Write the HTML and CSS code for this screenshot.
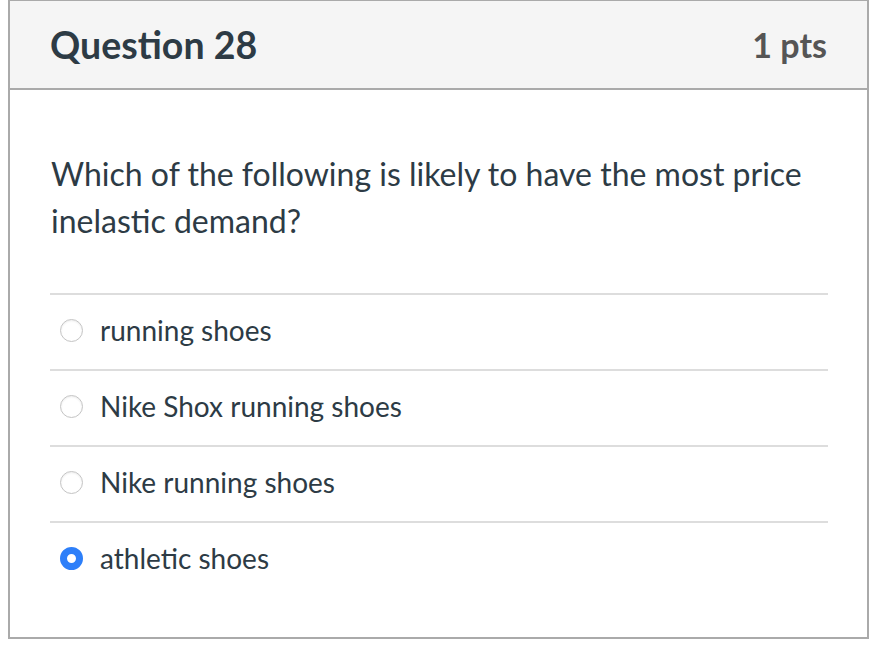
FILE: index.html
```html
<!DOCTYPE html>
<html>
<head>
<meta charset="utf-8">
<link rel="stylesheet" href="styles.css">
</head>
<body>
<div class="card">
  <div class="header">
    <div class="title">Question 28</div>
    <div class="pts">1 pts</div>
  </div>
  <div class="body">
    <div class="question">Which of the following is likely to have the most price inelastic demand?</div>
    <div class="answers">
      <div class="answer"><span class="radio"></span><span class="label">running shoes</span></div>
      <div class="answer"><span class="radio"></span><span class="label">Nike Shox running shoes</span></div>
      <div class="answer"><span class="radio"></span><span class="label">Nike running shoes</span></div>
      <div class="answer"><span class="radio checked"></span><span class="label">athletic shoes</span></div>
    </div>
  </div>
</div>
</body>
</html>
```

FILE: styles.css
```css
html, body {
  margin: 0;
  padding: 0;
  background: #ffffff;
}
body {
  padding: 0 11px 0 8px;
  font-family: Lato, "Open Sans", sans-serif;
  color: #2d3b45;
}
.card {
  border: 2px solid #aaaaaa;
  border-top-width: 1px;
  box-sizing: border-box;
  height: 639px;
}
.header {
  height: 87px;
  background: #f5f5f5;
  border-bottom: 2px solid #aaaaaa;
  display: flex;
  align-items: center;
  justify-content: space-between;
  padding: 0 40px 0 40px;
}
.title {
  font-size: 37.5px;
  font-weight: 700;
  color: #2d3b45;
}
.pts {
  font-size: 34px;
  font-weight: 700;
  color: #555555;
}
.body {
  padding: 0 39px 0 40px;
}
.question {
  font-size: 32px;
  line-height: 47px;
  padding: 60px 0 0 1px;
  margin-bottom: 49px;
}
.answer {
  border-top: 2px solid #dddddd;
  height: 74px;
  display: flex;
  align-items: center;
  padding-left: 10px;
  padding-bottom: 4px;
  box-sizing: border-box;
  height: 76px;
}
.radio {
  width: 21px;
  height: 21px;
  border-radius: 50%;
  border: 1px solid #c4c4c4;
  background: #fff;
  box-shadow: inset 0 1px 2px rgba(0,0,0,0.08);
  flex: none;
  box-sizing: content-box;
}
.radio.checked {
  border: 7px solid #2d7ff9;
  width: 9px;
  height: 9px;
  box-shadow: none;
}
.label {
  font-size: 28px;
  margin-left: 17px;
  color: #2d3b45;
}
```
